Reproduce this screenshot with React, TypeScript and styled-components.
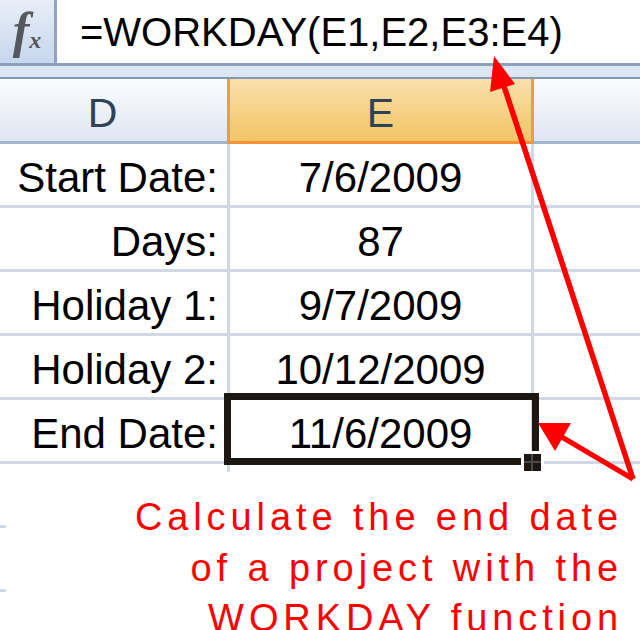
import React from "react";
import styled, { createGlobalStyle } from "styled-components";

const Global = createGlobalStyle`
  html, body { margin: 0; padding: 0; background: #ffffff; }
  body { overflow: hidden; }
`;

const Page = styled.div`
  position: relative;
  width: 640px;
  height: 630px;
  overflow: hidden;
  background: #ffffff;
  font-family: "Liberation Sans", Arial, sans-serif;
`;

const FormulaBar = styled.div`
  display: flex;
  height: 63px;
  border-bottom: 3px solid #8aa0bd;
`;

const FxBox = styled.div`
  width: 54px;
  flex: none;
  background: linear-gradient(#e8eef8, #c6d6ec);
  border-right: 3px solid #8ea4c2;
  display: flex;
  align-items: center;
  justify-content: center;
  color: #55595e;
  font-family: "Liberation Serif", "Times New Roman", serif;
  font-style: italic;
  font-weight: bold;
`;

const FxF = styled.span`
  font-size: 50px;
  line-height: 1;
  margin-top: -4px;
`;

const FxX = styled.span`
  font-size: 24px;
  line-height: 1;
  margin-top: 16px;
  margin-left: 0px;
`;

const FormulaText = styled.div`
  flex: 1;
  background: #ffffff;
  padding: 2px 0 0 23px;
  font-size: 40px;
  line-height: 61px;
  color: #000000;
  white-space: nowrap;
`;

const Band = styled.div`
  height: 11px;
  background: #dde7f4;
  border-bottom: 2px solid #7f98b7;
`;

const HeaderRow = styled.div`
  display: grid;
  grid-template-columns: 227px 301px 1fr;
  column-gap: 3px;
  background: #f29a3c;
`;

const HeaderCell = styled.div<{ $active?: boolean; $shift?: number }>`
  border-bottom: 3px solid ${(p) => (p.$active ? "#f29436" : "#a3b5cb")};
  background: ${(p) =>
    p.$active
      ? "linear-gradient(#fae0ab, #f2c465)"
      : "linear-gradient(#fafcfe, #dfe6f0)"};
  color: #2f4356;
  font-size: 41px;
  line-height: 56px;
  padding-top: 6px;
  height: 56px;
  text-align: center;
  padding-right: ${(p) => p.$shift ?? 0}px;
`;

const Sheet = styled.div`
  display: grid;
  grid-template-columns: 227px 301px 1fr;
  grid-auto-rows: 61px;
  gap: 3px;
  background: #d0d7e5;
`;

const Cell = styled.div<{ $align: "right" | "center" }>`
  background: #ffffff;
  font-size: 42px;
  line-height: 55px;
  padding-top: 6px;
  padding-right: ${(p) => (p.$align === "right" ? 9 : 0)}px;
  text-align: ${(p) => p.$align};
  color: #000000;
  white-space: nowrap;
  overflow: hidden;
`;

const Selection = styled.div`
  position: absolute;
  left: 224px;
  top: 393px;
  width: 315px;
  height: 72px;
  box-sizing: border-box;
  border: 7px solid #1c1711;
`;

const FillHandle = styled.div`
  position: absolute;
  left: 524px;
  top: 454px;
  width: 17px;
  height: 17px;
  background: #1c1711;
  box-shadow: 0 0 0 3px #ffffff;
  &::before {
    content: "";
    position: absolute;
    left: 7px;
    top: 0;
    width: 2px;
    height: 17px;
    background: #4a4a4a;
  }
  &::after {
    content: "";
    position: absolute;
    top: 7px;
    left: 0;
    height: 2px;
    width: 17px;
    background: #4a4a4a;
  }
`;

const Caption = styled.div`
  position: absolute;
  left: 6px;
  right: 0;
  top: 472px;
  bottom: 0;
  background: #ffffff;
  padding: 20px 17px 0 0;
  text-align: right;
  color: #ff0000;
  font-family: "Liberation Sans", Arial, sans-serif;
  font-size: 38px;
  letter-spacing: 4.9px;
  line-height: 50.5px;
  white-space: nowrap;
`;

const CaptionLine = styled.div<{ $last?: boolean }>`
  height: ${(p) => (p.$last ? "44px" : "auto")};
  line-height: ${(p) => (p.$last ? "44px" : "inherit")};
  margin-top: ${(p) => (p.$last ? "3px" : "0")};
`;

const Arrows = styled.svg`
  position: absolute;
  left: 0;
  top: 0;
  width: 640px;
  height: 630px;
  pointer-events: none;
`;

const rows: [string, string][] = [
  ["Start Date:", "7/6/2009"],
  ["Days:", "87"],
  ["Holiday 1:", "9/7/2009"],
  ["Holiday 2:", "10/12/2009"],
  ["End Date:", "11/6/2009"],
  ["", ""],
  ["", ""],
  ["", ""],
];

export default function App() {
  return (
    <>
      <Global />
      <Page>
        <FormulaBar>
          <FxBox>
            <FxF>f</FxF>
            <FxX>x</FxX>
          </FxBox>
          <FormulaText>=WORKDAY(E1,E2,E3:E4)</FormulaText>
        </FormulaBar>
        <Band />
        <HeaderRow>
          <HeaderCell $shift={22}>D</HeaderCell>
          <HeaderCell $active>E</HeaderCell>
          <HeaderCell />
        </HeaderRow>
        <Sheet>
          {rows.map(([label, value], i) => (
            <React.Fragment key={i}>
              <Cell $align="right">{label}</Cell>
              <Cell $align="center">{value}</Cell>
              <Cell $align="center" />
            </React.Fragment>
          ))}
        </Sheet>
        <Selection />
        <FillHandle />
        <Caption>
          <CaptionLine>Calculate the end date</CaptionLine>
          <CaptionLine>of a project with the</CaptionLine>
          <CaptionLine $last>WORKDAY function</CaptionLine>
        </Caption>
        <Arrows viewBox="0 0 640 630">
          <line x1="633" y1="479" x2="500" y2="74" stroke="#ff0000" strokeWidth="5.5" />
          <polygon points="494,56 515,84 490,92" fill="#ff0000" />
          <line x1="633" y1="479" x2="555" y2="433" stroke="#ff0000" strokeWidth="5" />
          <polygon points="538,423 571,423 555,451" fill="#ff0000" />
        </Arrows>
      </Page>
    </>
  );
}
